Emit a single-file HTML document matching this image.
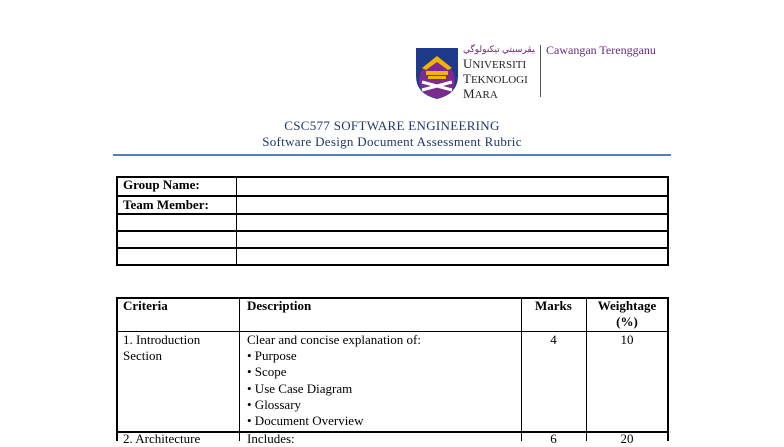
<!DOCTYPE html>
<html><head><style>
body{margin:0;width:784px;height:441px;background:#fff;position:relative;overflow:hidden;font-family:"Liberation Serif",serif;color:#000}
.a{position:absolute;white-space:nowrap}
.h{position:absolute;background:#000}
</style></head><body>
<svg class="a" style="left:414px;top:46px" width="46" height="54" viewBox="0 0 46 54">
<path d="M2 2 H44 V30 Q44 48 23 53 Q2 48 2 30 Z" fill="#1f3a8a"/>
<circle cx="23" cy="34" r="18" fill="#7b2a8e"/>
<path d="M8 22 L23 10 L38 22 L34 24 L23 16 L12 24Z" fill="#f2b400"/>
<path d="M12 25 H34 V29 H12Z M14 30 H32 V33 H14Z" fill="#f2b400"/>
<path d="M8 44 L38 36 M8 36 L38 44" stroke="#fff" stroke-width="3"/>
</svg>
<div class="a" style="left:463px;top:44px;width:72px;overflow:hidden;font-size:9px;color:#6a2a7a;letter-spacing:-1px">ﻮﻧﻴﭭﺮﺳﻴﺘﻲ ﺗﻴﻜﻨﻮﻟﻮﮔﻲ</div>
<div class="a" style="left:463px;top:57px;font-size:13px;line-height:13px;color:#222">U<span style="font-size:11px">NIVERSITI</span><br>T<span style="font-size:11px">EKNOLOGI</span><br>M<span style="font-size:11px">ARA</span></div>
<div class="h" style="left:540px;top:45px;width:1px;height:52px;background:#555"></div>
<div class="a" style="left:546px;top:43px;font-size:12px;color:#6a2a7a">Cawangan Terengganu</div>
<div class="a" style="left:0;width:784px;text-align:center;top:118px;font-size:13px;color:#1f3864;letter-spacing:0.3px">CSC577 SOFTWARE ENGINEERING</div>
<div class="a" style="left:0;width:784px;text-align:center;top:134px;font-size:13px;color:#1f3864;letter-spacing:0.3px">Software Design Document Assessment Rubric</div>
<div class="h" style="left:113px;top:154px;width:558px;height:2px;background:#4f81bd"></div>
<div class="h" style="left:116px;top:176px;width:553px;height:2px"></div>
<div class="h" style="left:116px;top:195px;width:553px;height:2px"></div>
<div class="h" style="left:116px;top:213px;width:553px;height:2px"></div>
<div class="h" style="left:116px;top:230px;width:553px;height:2px"></div>
<div class="h" style="left:116px;top:247px;width:553px;height:2px"></div>
<div class="h" style="left:116px;top:264px;width:553px;height:2px"></div>
<div class="h" style="left:116px;top:176px;width:2px;height:90px"></div>
<div class="h" style="left:236px;top:176px;width:1px;height:90px"></div>
<div class="h" style="left:667px;top:176px;width:2px;height:90px"></div>
<div class="a" style="left:123px;top:177px;font-size:13px;font-weight:bold">Group Name:</div>
<div class="a" style="left:123px;top:197px;font-size:13px;font-weight:bold">Team Member:</div>
<div class="h" style="left:116px;top:297px;width:553px;height:2px"></div>
<div class="h" style="left:116px;top:331px;width:553px;height:1px"></div>
<div class="h" style="left:116px;top:431px;width:553px;height:2px"></div>
<div class="h" style="left:116px;top:297px;width:2px;height:144px"></div>
<div class="h" style="left:239px;top:297px;width:1px;height:144px"></div>
<div class="h" style="left:521px;top:297px;width:1px;height:144px"></div>
<div class="h" style="left:586px;top:297px;width:1px;height:144px"></div>
<div class="h" style="left:667px;top:297px;width:2px;height:144px"></div>
<div class="a" style="left:123px;top:298px;font-size:13px;font-weight:bold">Criteria</div>
<div class="a" style="left:247px;top:298px;font-size:13px;font-weight:bold">Description</div>
<div class="a" style="left:535px;top:298px;font-size:13px;font-weight:bold">Marks</div>
<div class="a" style="left:586px;width:82px;text-align:center;top:298px;font-size:13px;font-weight:bold;line-height:16px">Weightage<br>(%)</div>
<div class="a" style="left:123px;top:332px;font-size:13px;line-height:16.2px">1. Introduction<br>Section</div>
<div class="a" style="left:247px;top:332px;font-size:13px;line-height:16.2px">Clear and concise explanation of:<br>• Purpose<br>• Scope<br>• Use Case Diagram<br>• Glossary<br>• Document Overview</div>
<div class="a" style="left:521px;width:65px;text-align:center;top:332px;font-size:13px">4</div>
<div class="a" style="left:586px;width:82px;text-align:center;top:332px;font-size:13px">10</div>
<div class="a" style="left:123px;top:431px;font-size:13px">2. Architecture</div>
<div class="a" style="left:247px;top:431px;font-size:13px">Includes:</div>
<div class="a" style="left:521px;width:65px;text-align:center;top:431px;font-size:13px">6</div>
<div class="a" style="left:586px;width:82px;text-align:center;top:431px;font-size:13px">20</div>
</body></html>
